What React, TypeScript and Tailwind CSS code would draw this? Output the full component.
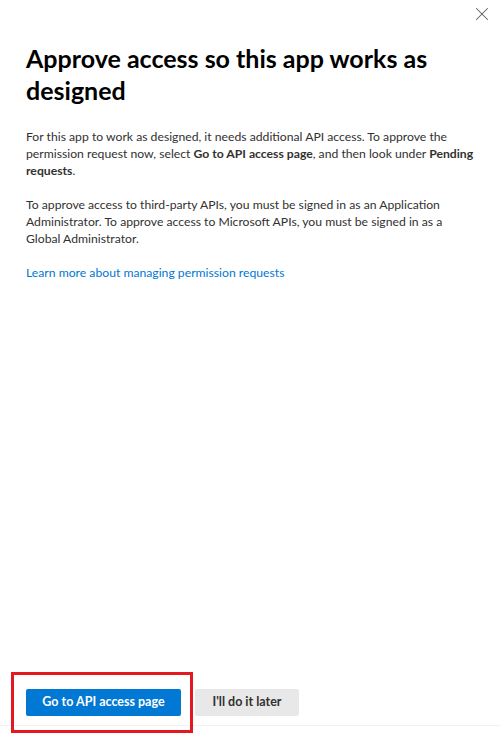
import { X } from "lucide-react";

export default function App() {
  return (
    <div
      className="relative w-[500px] h-[735px] bg-white flex flex-col overflow-hidden"
      style={{ fontFamily: 'Lato, "Open Sans", sans-serif' }}
    >
      <button className="absolute top-[3px] right-[7px] w-[22px] h-[22px] flex items-center justify-center text-[#605e5c]">
        <X className="w-[22px] h-[22px]" strokeWidth={1.1} />
      </button>

      <div className="flex-1 pl-[26px] pr-[24px] pt-[42px]">
        <h1 className="text-[25px] leading-[32px] font-bold text-[#000] pr-[2px]">
          Approve access so this app works as designed
        </h1>

        <div className="mt-[22px] text-[12.2px] leading-[17px] text-[#323130]">
          <p>
            For this app to work as designed, it needs additional API access. To approve the permission request now,
            select <span className="font-bold">Go to API access page</span>, and then look under{" "}
            <span className="font-bold">Pending requests</span>.
          </p>
          <p className="mt-[17px]">
            To approve access to third-party APIs, you must be signed in as an Application Administrator. To approve
            access to Microsoft APIs, you must be signed in as a Global Administrator.
          </p>
          <p className="mt-[17px]">
            <a href="#" className="text-[#0078d4]">
              Learn more about managing permission requests
            </a>
          </p>
        </div>
      </div>

      <div className="flex gap-[14px] px-[26px] pb-[9px]">
        <button className="h-[27px] w-[155px] rounded-[2px] bg-[#0078d4] text-white text-[12.5px] font-bold">
          Go to API access page
        </button>
        <button className="h-[27px] w-[104px] rounded-[2px] bg-[#e8e8e8] text-[#323130] text-[12.5px] font-bold">
          I'll do it later
        </button>
      </div>
      <div className="h-[10px] border-t border-[#f3f2f1]" />

      <div className="absolute left-[11px] top-[672px] w-[182px] h-[61px] border-[3px] border-[#e3191f]" />
    </div>
  );
}
